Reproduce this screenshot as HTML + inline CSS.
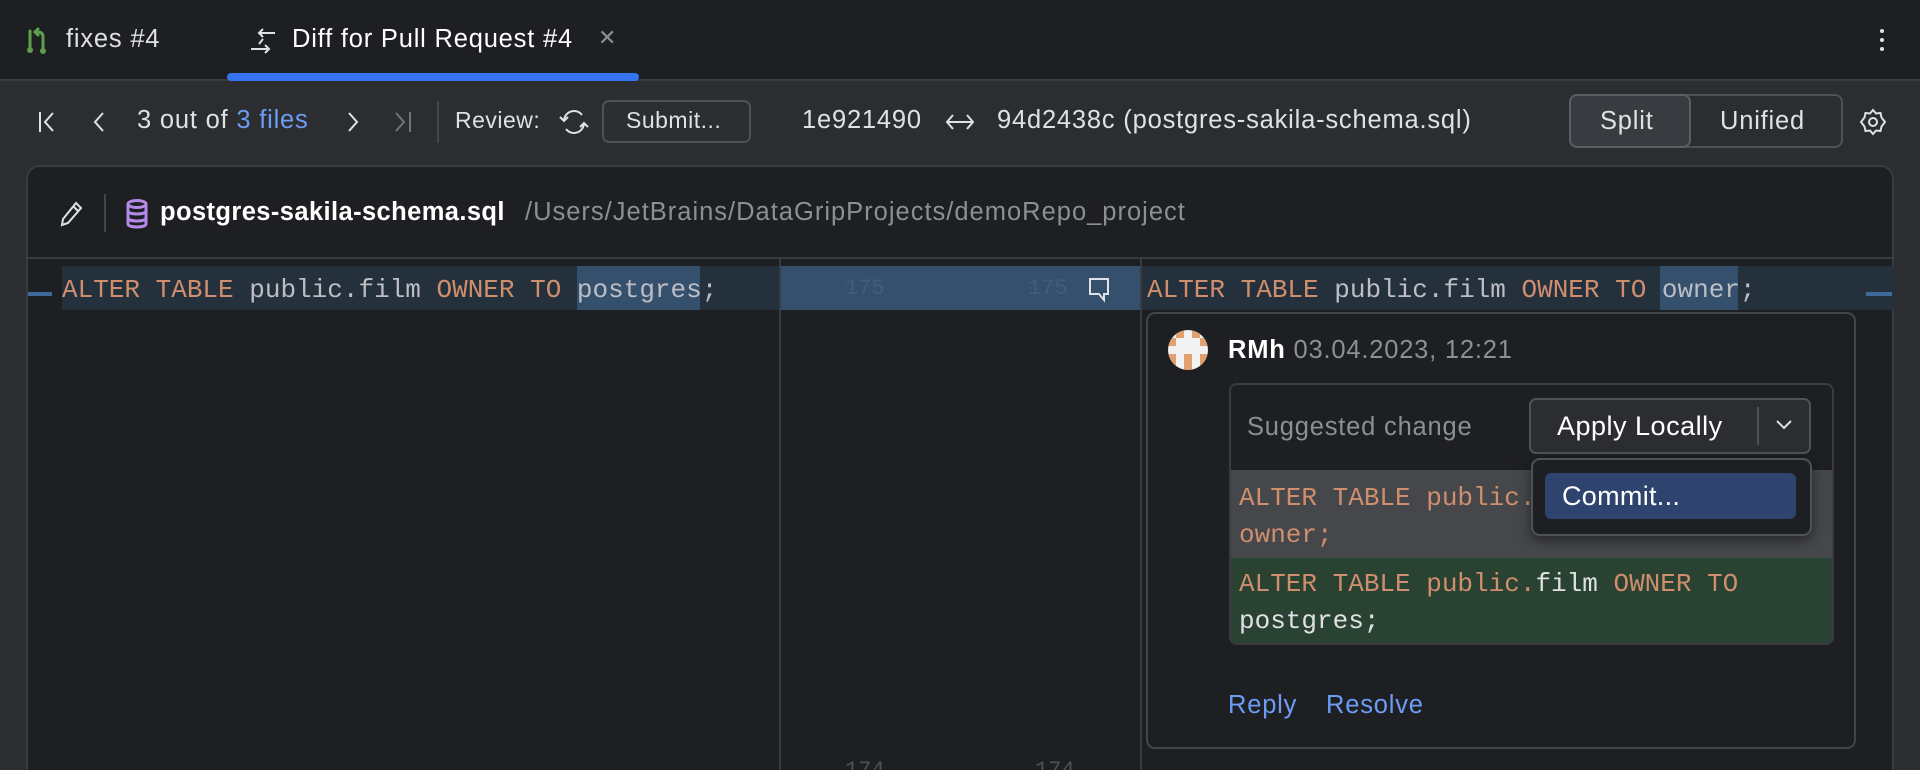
<!DOCTYPE html>
<html><head><meta charset="utf-8"><style>
*{margin:0;padding:0;box-sizing:border-box}
html,body{width:1920px;height:770px;overflow:hidden}
body{background:#2b2d30;font-family:"Liberation Sans",sans-serif;color:#dfe1e5;position:relative}
.a{position:absolute;white-space:nowrap}
.mono{font-family:"Liberation Mono",monospace;font-size:26px}
.k{color:#cf8e6d}
.ui{font-size:25.5px;line-height:1;letter-spacing:0.8px}
svg{position:absolute;overflow:visible}
</style></head><body>
<!-- tab bar -->
<div class="a" style="left:0;top:0;width:1920px;height:81px;background:#1e1f22;border-bottom:2px solid #393b40"></div>
<div class="a" style="left:227px;top:73px;width:412px;height:8px;background:#3574f0;border-radius:4px"></div>
<svg style="left:26px;top:27px" width="22" height="28" viewBox="0 0 22 28"><g stroke="#5f9e4f" stroke-width="3" fill="none" stroke-linecap="round"><path d="M4 4v18"/><path d="M17 24V10q0-5-5-5H9"/><path d="M12 2 9 5l3 3"/></g><circle cx="4" cy="23" r="3" fill="#5f9e4f"/><circle cx="17" cy="24" r="3" fill="#5f9e4f"/></svg>
<div class="a ui" style="left:66px;top:27px;color:#dfe1e5">fixes #4</div>
<svg style="left:249px;top:27px" width="30" height="28" viewBox="0 0 30 28"><g stroke="#dfe1e5" stroke-width="2" fill="none"><path d="M14 2l-4 4 4 4M10 6h16"/><path d="M16 18l4 4-4 4M2 22h18"/><path d="M14 12l-4 5"/></g></svg>
<div class="a ui" style="left:292px;top:27px;color:#fff">Diff for Pull Request #4</div>
<div class="a ui" style="left:598px;top:27px;color:#8c8f94;font-size:22px">✕</div>
<div class="a" style="left:1880px;top:29px;width:4px;height:4px;border-radius:2px;background:#dfe1e5;box-shadow:0 9px 0 #dfe1e5,0 18px 0 #dfe1e5"></div>

<!-- toolbar -->
<svg style="left:38px;top:111px" width="20" height="22"><g stroke="#dfe1e5" stroke-width="2" fill="none"><path d="M2 1v20M15 2 7 11l8 9"/></g></svg>
<svg style="left:92px;top:111px" width="14" height="22"><path d="M11 2 3 11l8 9" stroke="#dfe1e5" stroke-width="2" fill="none"/></svg>
<div class="a ui" style="left:137px;top:108px">3 out of <span style="color:#6d9cf5">3 files</span></div>
<svg style="left:346px;top:111px" width="14" height="22"><path d="M3 2l8 9-8 9" stroke="#dfe1e5" stroke-width="2" fill="none"/></svg>
<svg style="left:393px;top:111px" width="20" height="22"><g stroke="#6f737a" stroke-width="2" fill="none"><path d="M3 2l8 9-8 9M17 1v20"/></g></svg>
<div class="a" style="left:437px;top:101px;width:2px;height:42px;background:#43454a"></div>
<div class="a ui" style="left:455px;top:109px;font-size:23px;letter-spacing:0.5px">Review:</div>
<svg style="left:558px;top:107px" width="32" height="30" viewBox="0 0 32 30"><g stroke="#dfe1e5" stroke-width="2" fill="none"><path d="M6 14a10 10 0 0 1 18-6"/><path d="M26 16a10 10 0 0 1-18 6"/><path d="M2 10l4 4 4-4M22 20l4-4 4 4"/></g></svg>
<div class="a" style="left:602px;top:100px;width:149px;height:43px;border:2px solid #4e5157;border-radius:7px"></div>
<div class="a ui" style="left:626px;top:109px;font-size:23px;letter-spacing:0.5px">Submit...</div>
<div class="a ui" style="left:802px;top:108px">1e921490</div>
<svg style="left:945px;top:112px" width="30" height="20"><g stroke="#dfe1e5" stroke-width="2" fill="none"><path d="M2 10h26M8 3 2 10l6 7M22 3l6 7-6 7"/></g></svg>
<div class="a ui" style="left:997px;top:108px">94d2438c (postgres-sakila-schema.sql)</div>
<div class="a" style="left:1569px;top:94px;width:274px;height:54px;border:2px solid #4e5157;border-radius:8px"></div>
<div class="a" style="left:1569px;top:94px;width:122px;height:54px;border:2px solid #5a5d63;border-radius:8px;background:#393b40"></div>
<div class="a ui" style="left:1600px;top:109px">Split</div>
<div class="a ui" style="left:1720px;top:109px">Unified</div>
<svg style="left:1860px;top:109px" width="26" height="26" viewBox="0 0 26 26"><g stroke="#dfe1e5" stroke-width="2" fill="none"><path d="M13 1l3 3.5 4.5-.5 1 4.5L25 13l-3.5 4.5-1 4.5-4.5-.5L13 25l-3-3.5-4.5.5-1-4.5L1 13l3.5-4.5 1-4.5 4.5.5z"/><circle cx="13" cy="13" r="4"/></g></svg>

<!-- editor -->
<div class="a" style="left:26px;top:165px;width:1868px;height:620px;background:#1e1f22;border:2px solid #393b40;border-radius:14px 14px 0 0"></div>
<svg style="left:60px;top:201px" width="24" height="26" viewBox="0 0 24 26"><path d="M16 2l5 5L8 22l-6 2 1-6z M13 5l5 5" stroke="#dfe1e5" stroke-width="2" fill="none"/></svg>
<div class="a" style="left:104px;top:194px;width:2px;height:38px;background:#43454a"></div>
<svg style="left:126px;top:199px" width="22" height="30" viewBox="0 0 22 30"><g stroke="#b48ae8" stroke-width="3" fill="none"><ellipse cx="11" cy="5" rx="9" ry="3.5"/><path d="M2 5v20c0 4 18 4 18 0V5M2 12c0 4 18 4 18 0M2 19c0 4 18 4 18 0"/></g></svg>
<div class="a ui" style="left:160px;top:200px;font-weight:bold;color:#fff;letter-spacing:0.4px">postgres-sakila-schema.sql</div>
<div class="a ui" style="left:525px;top:200px;color:#8c8f94;letter-spacing:1px">/Users/JetBrains/DataGripProjects/demoRepo_project</div>
<div class="a" style="left:28px;top:257px;width:1864px;height:2px;background:#393b40"></div>
<div class="a" style="left:779px;top:259px;width:2px;height:520px;background:#393b40"></div>
<div class="a" style="left:1140px;top:259px;width:2px;height:520px;background:#393b40"></div>
<!-- code line -->
<div class="a" style="left:62px;top:266px;width:717px;height:44px;background:#25303d"></div>
<div class="a" style="left:577px;top:266px;width:123px;height:44px;background:#35506c"></div>
<div class="a" style="left:781px;top:266px;width:359px;height:44px;background:#35506c"></div>
<div class="a" style="left:1142px;top:266px;width:752px;height:44px;background:#25303d"></div>
<div class="a" style="left:1660px;top:266px;width:78px;height:44px;background:#35506c"></div>
<div class="a" style="left:28px;top:292px;width:24px;height:4px;background:#3e6a9b"></div>
<div class="a" style="left:1866px;top:292px;width:26px;height:4px;background:#3e6a9b"></div>
<div class="a mono" style="left:62px;top:275px;color:#bcbec4"><span class="k">ALTER TABLE</span> public.film <span class="k">OWNER TO</span> postgres;</div>
<div class="a mono" style="left:1147px;top:275px;color:#bcbec4"><span class="k">ALTER TABLE</span> public.film <span class="k">OWNER TO</span> owner;</div>
<div class="a mono" style="left:845px;top:276px;color:#3f5d7c;font-size:22px">175</div>
<div class="a mono" style="left:1028px;top:276px;color:#3f5d7c;font-size:22px">175</div>
<svg style="left:1088px;top:277px" width="22" height="26" viewBox="0 0 22 26"><path d="M2 2h18v15h-4v6l-5-6H2z" stroke="#dfe1e5" stroke-width="2" fill="none"/></svg>
<div class="a mono" style="left:845px;top:758px;color:#4e5157;font-size:22px">174</div>
<div class="a mono" style="left:1035px;top:758px;color:#4e5157;font-size:22px">174</div>

<!-- comment -->
<div class="a" style="left:1146px;top:312px;width:710px;height:437px;background:#1e1f22;border:2px solid #43454a;border-radius:9px"></div>
<svg style="left:1168px;top:330px" width="40" height="40" viewBox="0 0 40 40"><defs><clipPath id="c"><circle cx="20" cy="20" r="20"/></clipPath></defs><g clip-path="url(#c)"><rect width="40" height="40" fill="#f2f2f2"/><rect x="0" y="8" width="8" height="8" fill="#e0a070"/><rect x="32" y="8" width="8" height="8" fill="#e0a070"/><rect x="8" y="0" width="8" height="8" fill="#e0a070"/><rect x="24" y="0" width="8" height="8" fill="#e0a070"/><rect x="0" y="24" width="8" height="16" fill="#e0a070"/><rect x="32" y="24" width="8" height="16" fill="#e0a070"/><rect x="16" y="24" width="8" height="16" fill="#e0a070"/></g></svg>
<div class="a ui" style="left:1228px;top:338px"><b style="color:#fff">RMh</b> <span style="color:#8c8f94">03.04.2023, 12:21</span></div>
<div class="a" style="left:1229px;top:383px;width:605px;height:262px;border:2px solid #393b40;border-radius:8px;overflow:hidden;background:#1e1f22">
  <div class="a" style="left:0;top:85px;width:605px;height:88px;background:#45474a"></div>
  <div class="a" style="left:0;top:173px;width:605px;height:89px;background:#2a4232"></div>
</div>
<div class="a ui" style="left:1247px;top:415px;color:#8c8f94">Suggested change</div>
<div class="a mono" style="left:1239px;top:480px;line-height:37px;color:#cf8e6d">ALTER TABLE public.<br>owner;</div>
<div class="a mono" style="left:1239px;top:566px;line-height:37px;color:#dfe1e5"><span class="k">ALTER TABLE public.</span>film <span class="k">OWNER TO</span><br>postgres;</div>
<div class="a" style="left:1529px;top:398px;width:282px;height:56px;border:2px solid #4e5157;border-radius:7px;background:#2b2d30"></div>
<div class="a" style="left:1757px;top:407px;width:2px;height:38px;background:#4e5157"></div>
<div class="a ui" style="left:1557px;top:413px;color:#fff;font-size:27px;letter-spacing:0.5px">Apply Locally</div>
<svg style="left:1776px;top:420px" width="16" height="10"><path d="M1 1l7 7 7-7" stroke="#dfe1e5" stroke-width="2" fill="none"/></svg>
<div class="a" style="left:1531px;top:458px;width:281px;height:78px;border:2px solid #4e5157;border-radius:9px;background:#1e1f22;box-shadow:0 4px 12px rgba(0,0,0,.5)"></div>
<div class="a" style="left:1545px;top:473px;width:251px;height:46px;border-radius:6px;background:#2e436e"></div>
<div class="a ui" style="left:1562px;top:483px;color:#fff;font-size:27px;letter-spacing:0.3px">Commit...</div>
<div class="a ui" style="left:1228px;top:693px;color:#6d9cf5">Reply</div>
<div class="a ui" style="left:1326px;top:693px;color:#6d9cf5">Resolve</div>
</body></html>
